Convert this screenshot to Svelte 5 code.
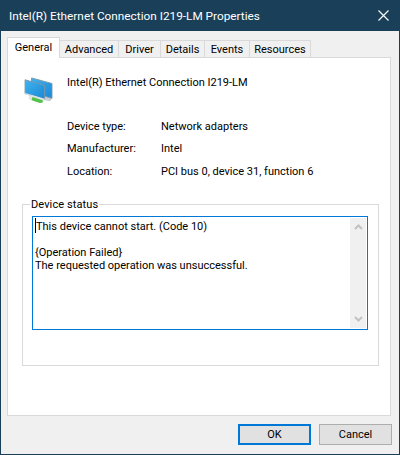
<script>
	const tabs = ['General', 'Advanced', 'Driver', 'Details', 'Events', 'Resources'];
	const rows = [
		['Device type:', 'Network adapters'],
		['Manufacturer:', 'Intel'],
		['Location:', 'PCI bus 0, device 31, function 6']
	];
</script>

<div class="window">
	<header class="titlebar">
		<span class="title">Intel(R) Ethernet Connection I219-LM Properties</span>
		<svg class="close" width="11" height="11" viewBox="0 0 11 11">
			<path d="M.5.5l10 10M10.5.5l-10 10" stroke="#fff" stroke-width="1.1" fill="none" />
		</svg>
	</header>

	<div class="body">
		<nav class="tabs">
			{#each tabs as tab, i}
				<div class="tab tab-{i}" class:active={i === 0}>{tab}</div>
			{/each}
		</nav>

		<section class="panel">
			<div class="device">
				<svg class="device-icon" width="30" height="26" viewBox="0 0 32 28">
					<defs>
						<linearGradient id="screen" x1="0" y1="0" x2="1" y2="1">
							<stop offset="0" stop-color="#3fb4ee" />
							<stop offset="1" stop-color="#1a87d6" />
						</linearGradient>
					</defs>
					<path d="M16 24l12 2 2-3-14-3z" fill="#c8cdd0" />
					<path d="M8 1l22 6v16L8 17z" fill="url(#screen)" stroke="#7d96a8" />
					<path d="M1 3l21 6v15L1 18z" fill="url(#screen)" stroke="#7d96a8" />
					<path d="M1 18l21 6" stroke="#d9e3e8" stroke-width="1.4" />
					<path d="M5 21l4-1 12 4v3l-4 1-12-4z" fill="#dfe5e0" />
					<path d="M9 21.5l11 3.5v2.5l-3 .5-9-3z" fill="#54c24a" />
				</svg>
				<span>Intel(R) Ethernet Connection I219-LM</span>
			</div>

			<dl class="props">
				{#each rows as [label, value]}
					<div class="row">
						<dt>{label}</dt>
						<dd>{value}</dd>
					</div>
				{/each}
			</dl>

			<fieldset class="status">
				<legend>Device status</legend>
				<div class="textbox">
					<div class="message">
						<p><span class="caret"></span>This device cannot start. (Code 10)</p>
						<p class="gap">{'{'}Operation Failed{'}'}</p>
						<p>The requested operation was unsuccessful.</p>
					</div>
					<div class="scrollbar">
						<svg width="9" height="6" viewBox="0 0 9 6"><path d="M1 5l3.5-3.5L8 5" stroke="#c2c2c2" stroke-width="2" fill="none" /></svg>
						<svg width="9" height="6" viewBox="0 0 9 6"><path d="M1 1l3.5 3.5L8 1" stroke="#c2c2c2" stroke-width="2" fill="none" /></svg>
					</div>
				</div>
			</fieldset>
		</section>

		<footer class="buttons">
			<button class="default">OK</button>
			<button>Cancel</button>
		</footer>
	</div>
</div>

<style>
	:global(body) {
		margin: 0;
	}

	.window {
		box-sizing: border-box;
		width: 400px;
		height: 455px;
		display: flex;
		flex-direction: column;
		border: 1px solid #1a4059;
		border-top: 0;
		background: #f0f0f0;
		font-family: Roboto, Lato, sans-serif;
		font-size: 11px;
		color: #000;
	}

	.titlebar {
		height: 31px;
		flex: none;
		display: flex;
		align-items: center;
		justify-content: space-between;
		padding: 0 5px 0 9px;
		margin: 0 -1px;
		background: #1a4059;
		color: #fff;
		font-size: 11.8px;
	}

	.close {
		margin-right: 6px;
	}

	.body {
		flex: 1;
		display: flex;
		flex-direction: column;
		padding: 7px 8px 0 6px;
	}

	.tabs {
		height: 20px;
		display: flex;
		align-items: flex-end;
		position: relative;
		z-index: 1;
		margin-bottom: -1px;
	}

	.tab {
		box-sizing: border-box;
		height: 18px;
		display: flex;
		align-items: center;
		justify-content: center;
		border: 1px solid #d9d9d9;
		border-left: 0;
		border-bottom: 1px solid #d9d9d9;
		background: #f0f0f0;
		padding-top: 1px;
	}

	.tab.active {
		height: 21px;
		border-left: 1px solid #d9d9d9;
		border-bottom: 0;
		background: #fff;
		padding: 0 0 1px;
	}

	.tab-0 { width: 53px; }
	.tab-1 { width: 59px; }
	.tab-2 { width: 42px; }
	.tab-3 { width: 44px; }
	.tab-4 { width: 45px; }
	.tab-5 { width: 61px; }

	.panel {
		box-sizing: border-box;
		height: 359px;
		border: 1px solid #d9d9d9;
		background: #fff;
		padding: 14px 12px 0 15px;
	}

	.device {
		height: 20px;
		display: flex;
		align-items: center;
		gap: 13px;
		position: relative;
	}

	.device-icon {
		margin-top: 16px;
		margin-left: 1px;
	}

	.props {
		margin: 23px 0 0 44px;
	}

	.row {
		height: 22.5px;
		display: flex;
		align-items: center;
	}

	dt {
		width: 94px;
	}

	dd {
		margin: 0;
	}

	.status {
		box-sizing: border-box;
		width: 357px;
		height: 169px;
		margin: 14px 0 0 -1px;
		padding: 3px 8px 0 9px;
		border: 1px solid #d9d9d9;
	}

	legend {
		padding: 0 1px;
		margin-left: -2px;
		line-height: 16px;
		letter-spacing: 0.1px;
	}

	.textbox {
		box-sizing: border-box;
		width: 336px;
		height: 114px;
		display: flex;
		justify-content: space-between;
		border: 1px solid #0078d7;
		padding: 1px;
	}

	.message {
		padding: 0 0 0 1px;
		line-height: 13px;
	}

	p {
		margin: 0;
	}

	.gap {
		margin-top: 13px;
	}

	.caret {
		display: inline-block;
		width: 1px;
		height: 15px;
		background: #000;
		vertical-align: -3px;
	}

	.scrollbar {
		width: 16px;
		display: flex;
		flex-direction: column;
		align-items: center;
		justify-content: space-between;
		padding: 6px 0;
		box-sizing: border-box;
		background: #f0f0f0;
	}

	.buttons {
		display: flex;
		justify-content: flex-end;
		gap: 8px;
		margin-top: 8px;
		margin-right: -1px;
	}

	button {
		box-sizing: border-box;
		width: 73px;
		height: 21px;
		padding: 0;
		border: 1px solid #adadad;
		border-radius: 0;
		background: #e1e1e1;
		font: inherit;
		color: #000;
	}

	button.default {
		border: 2px solid #0078d7;
	}
</style>
